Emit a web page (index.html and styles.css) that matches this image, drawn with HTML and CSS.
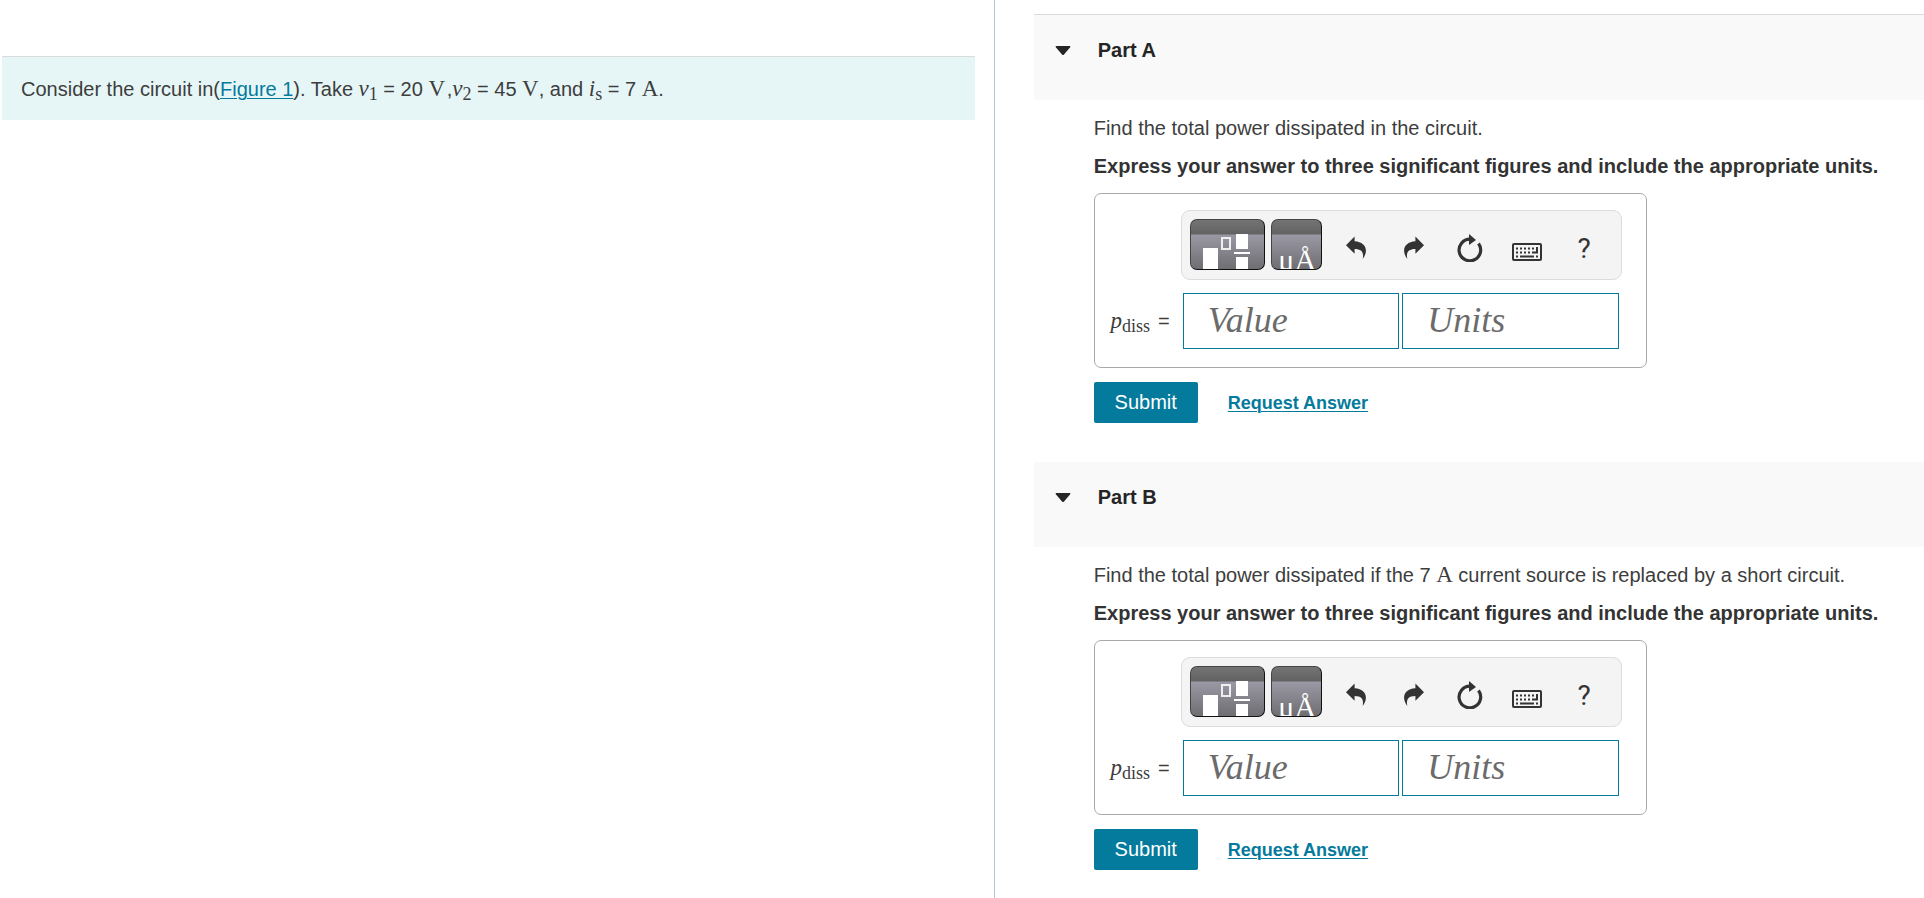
FILE: index.html
```html
<!DOCTYPE html>
<html lang="en">
<head>
<meta charset="utf-8">
<title>Circuit power</title>
<link rel="stylesheet" href="styles.css">
</head>
<body>
<svg class="sprite" aria-hidden="true">
  <symbol id="undo" viewBox="0 0 22 24"><path d="M0 9L9 0v5C17 5.500 21.500 10 20.800 16c-.4 3-1.500 5-3.300 7.500C19 16 16 13 9 13v5z"/></symbol>
  <symbol id="redo" viewBox="0 0 22 24"><path d="M22 9L13 0v5C5 5.500.5 10 1.200 16c.4 3 1.500 5 3.300 7.500C3 16 6 13 13 13v5z"/></symbol>
  <symbol id="reset" viewBox="0 0 26 28"><path d="M21.500 9.500A10.800 10.800 0 1 1 13 5.200" fill="none" stroke="currentColor" stroke-width="3.200"/><path d="M12 0l7 6-7 5z"/></symbol>
  <symbol id="keyboard" viewBox="0 0 30 18"><rect x="1" y="1" width="28" height="16" rx="1" fill="none" stroke="currentColor" stroke-width="2"/><path d="M4 5.500h19M4 9.500h19M4 13.500h2M24 13.500h2" fill="none" stroke="currentColor" stroke-width="2" stroke-dasharray="2 2"/><path d="M8 13.500h14M22 9.500h3V4" fill="none" stroke="currentColor" stroke-width="2"/></symbol>
  <symbol id="template" viewBox="0 0 73 49"><path d="M12 28h15v21H12zM45 14h12v15H45zM43 32h16v2H43zM45 37h12v12H45z" fill="#fff"/><path d="M31 18h8v11h-8z" fill="none" stroke="#eee" stroke-width="2"/></symbol>
</svg>
<div class="page">
  <main class="problem">
    <p class="prompt">Consider the circuit in(<a href="#figure">Figure 1</a>). Take <span class="math"><i>v</i><sub>1</sub></span> = 20 <span class="math">V</span>&hairsp;,<span class="math"><i>v</i><sub>2</sub></span> = 45 <span class="math">V</span>, and <span class="math"><i>i</i><sub>s</sub></span> = 7 <span class="math">A</span>.</p>
  </main>
  <div class="parts">
    <section class="part">
      <header class="part-head"><button class="toggle" aria-label="Collapse Part A"><svg class="caret" viewBox="0 0 16 9"><path d="M1.500 0h13q1.500 0 .5 1.500L9 8.500q-1 1-2 0L1 1.500Q0 0 1.500 0z"/></svg></button><h2>Part A</h2></header>
      <div class="part-body">
        <p>Find the total power dissipated in the circuit.</p>
        <p class="strong">Express your answer to three significant figures and include the appropriate units.</p>
        <form class="answer">
          <div class="toolbar">
            <button type="button" class="palette wide" aria-label="Templates"><svg viewBox="0 0 73 49"><use href="#template"/></svg></button>
            <button type="button" class="palette" aria-label="Units"><span class="glyphs">μÅ</span></button>
            <button type="button" class="tool" aria-label="Undo"><svg class="arrow"><use href="#undo"/></svg></button>
            <button type="button" class="tool" aria-label="Redo"><svg class="arrow"><use href="#redo"/></svg></button>
            <button type="button" class="tool" aria-label="Reset"><svg class="reset"><use href="#reset"/></svg></button>
            <button type="button" class="tool" aria-label="Keyboard"><svg class="keys"><use href="#keyboard"/></svg></button>
            <button type="button" class="tool help" aria-label="Help">?</button>
          </div>
          <label class="lhs" for="value-a"><span class="math"><i>p</i><sub>diss</sub></span> =</label>
          <div class="fields"><input id="value-a" type="text" placeholder="Value"><input type="text" placeholder="Units" aria-label="Units"></div>
        </form>
        <div class="actions"><button class="submit">Submit</button><a href="#request-a">Request Answer</a></div>
      </div>
    </section>
    <section class="part">
      <header class="part-head"><button class="toggle" aria-label="Collapse Part B"><svg class="caret" viewBox="0 0 16 9"><path d="M1.500 0h13q1.500 0 .5 1.500L9 8.500q-1 1-2 0L1 1.500Q0 0 1.500 0z"/></svg></button><h2>Part B</h2></header>
      <div class="part-body">
        <p>Find the total power dissipated if the 7 <span class="math">A</span> current source is replaced by a short circuit.</p>
        <p class="strong">Express your answer to three significant figures and include the appropriate units.</p>
        <form class="answer">
          <div class="toolbar">
            <button type="button" class="palette wide" aria-label="Templates"><svg viewBox="0 0 73 49"><use href="#template"/></svg></button>
            <button type="button" class="palette" aria-label="Units"><span class="glyphs">μÅ</span></button>
            <button type="button" class="tool" aria-label="Undo"><svg class="arrow"><use href="#undo"/></svg></button>
            <button type="button" class="tool" aria-label="Redo"><svg class="arrow"><use href="#redo"/></svg></button>
            <button type="button" class="tool" aria-label="Reset"><svg class="reset"><use href="#reset"/></svg></button>
            <button type="button" class="tool" aria-label="Keyboard"><svg class="keys"><use href="#keyboard"/></svg></button>
            <button type="button" class="tool help" aria-label="Help">?</button>
          </div>
          <label class="lhs" for="value-b"><span class="math"><i>p</i><sub>diss</sub></span> =</label>
          <div class="fields"><input id="value-b" type="text" placeholder="Value"><input type="text" placeholder="Units" aria-label="Units"></div>
        </form>
        <div class="actions"><button class="submit">Submit</button><a href="#request-b">Request Answer</a></div>
      </div>
    </section>
  </div>
</div>
</body>
</html>
```
FILE: styles.css
```css
* { box-sizing: border-box; }
body {
  margin: 0;
  background: #fff;
  color: #3d3d3d;
  font: 20px/24px "Liberation Sans", Arial, sans-serif;
}
button, input { font-family: inherit; color: inherit; margin: 0; padding: 0; }
button { border: 0; background: none; cursor: pointer; }
p, h2 { margin: 0; }
a { color: #047a9c; text-decoration-thickness: 1px; text-underline-offset: 2px; }
.sprite { display: none; }
.page {
  display: grid;
  grid-template-columns: 517fr 483fr;
  min-height: 100vh;
}
.problem {
  padding: 56px 19px 0 2px;
  border-right: 1px solid #b4c8dc;
}
.prompt {
  padding: 20px 19px 19px;
  border-top: 1px solid #dadcdc;
  background: #e6f6f7;
}
.math { font-family: "Liberation Serif", "Times New Roman", serif; font-size: 23px; line-height: 20px; }
.math sub { font-size: 18px; line-height: 0; vertical-align: -4px; }
.parts { padding: 14px 0 0 39px; min-width: 0; }
.part + .part { margin-top: 39px; }
.part-head {
  display: flex;
  align-items: flex-start;
  gap: 27px;
  height: 85px;
  padding: 23px 21px 0;
  background: #f9f9f9;
}
.part:first-child .part-head { border-top: 1px solid #dadada; height: 86px; }
.part-head h2 { font-size: 20px; line-height: 24px; color: #252525; }
.toggle { display: flex; align-items: center; height: 24px; }
.caret { width: 16px; height: 9px; fill: #252525; }
.part-body { padding: 16px 0 0 60px; }
.part-body p { line-height: 24px; margin-bottom: 14px; }
.part-body .strong { font-weight: bold; color: #333; margin-bottom: 15px; }
.answer {
  display: grid;
  grid-template-columns: 75px 441px;
  gap: 13px 11px;
  width: fit-content;
  padding: 16px 24px 18px 0;
  border: 1px solid #a9a9a9;
  border-radius: 7px;
}
.toolbar {
  grid-column: 2;
  display: flex;
  align-items: center;
  height: 70px;
  padding: 0 8px 2px;
  border: 1px solid #dcdcdc;
  border-radius: 9px;
  background: #f4f4f4;
}
.palette {
  width: 51px;
  height: 51px;
  margin-right: 6px;
  border: 1px solid #111;
  border-top-color: #444;
  border-left-color: #444;
  border-radius: 7px;
  overflow: hidden;
  background: linear-gradient(#747474, #626262 14px, #9a98a4 15px, #6f6e72);
}
.wide { width: 75px; }
.palette svg { display: block; width: 100%; height: 100%; }
.glyphs {
  display: block;
  height: 49px;
  padding: 24px 0 0 2px;
  color: #fff;
  font: 30px/32px "Liberation Serif", serif;
}
.tool {
  flex: 1;
  display: flex;
  justify-content: center;
  align-items: center;
  height: 50px;
  padding-top: 16px;
  color: #333;
}
.tool svg { fill: currentColor; }
.arrow { width: 21px; height: 24px; margin-bottom: 8px; }
.reset { width: 26px; height: 28px; margin-bottom: 8px; }
.keys { width: 30px; height: 18px; }
.help { font: 28px/32px Roboto, sans-serif; padding-top: 10px; }
.lhs { display: flex; align-items: center; justify-content: flex-end; gap: 8px; white-space: nowrap; }
.fields { display: flex; gap: 3px; padding: 0 3px 0 2px; }
.fields input {
  flex: 1;
  min-width: 0;
  height: 56px;
  padding: 0 24px 2px;
  border: 1px solid #047a9c;
  font: italic 36px "Liberation Serif", "Times New Roman", serif;
}
.fields input::placeholder { color: #6b6b6b; opacity: 1; }
.actions { display: flex; align-items: center; gap: 30px; margin-top: 14px; }
.submit {
  width: 104px;
  height: 41px;
  border-radius: 2px;
  background: #047a9c;
  color: #fff;
  font-size: 20px;
}
.actions a { font-size: 18px; font-weight: bold; }
```
